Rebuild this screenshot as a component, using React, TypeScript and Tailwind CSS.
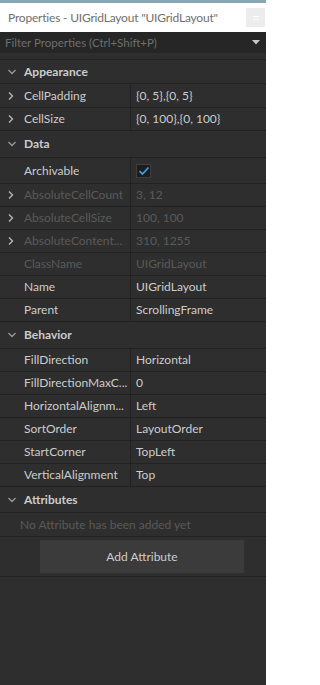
import { ReactNode } from "react";

const ChevronRight = () => (
  <svg width="8" height="10" viewBox="0 0 8 10" className="shrink-0">
    <path d="M2 1.5 L5.5 5 L2 8.5" fill="none" stroke="#b5b5b5" strokeWidth="1.4" />
  </svg>
);

const ChevronDown = () => (
  <svg width="10" height="8" viewBox="0 0 10 8" className="shrink-0">
    <path d="M1.5 2 L5 5.5 L8.5 2" fill="none" stroke="#9a9a9a" strokeWidth="1.3" />
  </svg>
);

type Prop = {
  name: string;
  value?: ReactNode;
  expand?: boolean;
  dim?: boolean;
  h?: string;
};

const Row = ({ name, value, expand, dim, h = "h-[23px]" }: Prop) => (
  <div className={`flex border-b border-[#222222] ${h}`}>
    <div className="w-[131px] flex items-center border-r border-[#222222] shrink-0">
      <div className="w-[22px] flex justify-center mr-[2px]">{expand && <ChevronRight />}</div>
      <span className={`whitespace-nowrap overflow-hidden ${dim ? "text-[#5a5a5a]" : "text-[#cccccc]"}`}>{name}</span>
    </div>
    <div className={`flex items-center pl-[5px] whitespace-nowrap ${dim ? "text-[#5a5a5a]" : "text-[#cccccc]"}`}>{value}</div>
  </div>
);

const Header = ({ title, h = "h-[26px]" }: { title: string; h?: string }) => (
  <div className={`flex items-center border-b border-[#222222] ${h}`}>
    <div className="w-[24px] flex justify-center">
      <ChevronDown />
    </div>
    <span className="font-bold text-[#cccccc]">{title}</span>
  </div>
);

const Check = () => (
  <div className="w-[15px] h-[14px] bg-[#1d1d1d] border border-[#3e3e3e] flex items-center justify-center">
    <svg width="12" height="10" viewBox="0 0 12 10">
      <path d="M1.5 5.2 L4.5 8 L10.5 1.5" fill="none" stroke="#3d9de3" strokeWidth="1.8" />
    </svg>
  </div>
);

export default function App() {
  return (
    <div
      className="w-[266px] h-[685px] bg-[#2e2e2e] flex flex-col text-[12px] overflow-hidden"
      style={{ fontFamily: "Lato, 'Noto Sans', sans-serif" }}
    >
      {/* Title bar */}
      <div className="h-[3px] bg-[#8aa7b5]" />
      <div className="h-[29px] bg-white flex items-center pl-[8px]">
        <span className="text-[#707070] text-[12px] tracking-[-0.2px] flex-1 whitespace-nowrap">
          Properties - UIGridLayout "UIGridLayout"
        </span>
        <div className="w-[19px] h-[19px] bg-[#ececec] flex flex-col items-center justify-center gap-[2px] mr-[1px]">
          <div className="w-[6px] h-px bg-white" />
          <div className="w-[6px] h-px bg-white" />
        </div>
      </div>

      {/* Filter */}
      <div className="h-[21px] bg-[#262626] flex items-center pl-[5px] pr-[6px]">
        <span className="flex-1 text-[#6e6e6e] text-[11.5px]">Filter Properties (Ctrl+Shift+P)</span>
        <svg width="8" height="5" viewBox="0 0 8 5">
          <path d="M0 0 H8 L4 4.5 Z" fill="#c8c8c8" />
        </svg>
      </div>
      <div className="h-[7px] border-b border-[#222222]" />

      <Header title="Appearance" h="h-[24px]" />
      <Row name="CellPadding" value="{0, 5},{0, 5}" expand h="h-[24px]" />
      <Row name="CellSize" value="{0, 100},{0, 100}" expand />

      <Header title="Data" h="h-[27px]" />
      <Row name="Archivable" value={<Check />} h="h-[26px]" />
      <Row name="AbsoluteCellCount" value="3, 12" expand dim />
      <Row name="AbsoluteCellSize" value="100, 100" expand dim />
      <Row name="AbsoluteContent..." value="310, 1255" expand dim />
      <Row name="ClassName" value="UIGridLayout" dim />
      <Row name="Name" value="UIGridLayout" />
      <Row name="Parent" value="ScrollingFrame" />

      <Header title="Behavior" h="h-[27px]" />
      <Row name="FillDirection" value="Horizontal" />
      <Row name="FillDirectionMaxC..." value="0" />
      <Row name="HorizontalAlignm..." value="Left" />
      <Row name="SortOrder" value="LayoutOrder" />
      <Row name="StartCorner" value="TopLeft" />
      <Row name="VerticalAlignment" value="Top" />

      <Header title="Attributes" h="h-[26px]" />
      <div className="h-[24px] flex items-center pl-[20px] text-[#5a5a5a] border-b border-[#222222]">
        No Attribute has been added yet
      </div>
      <div className="h-[40px] flex items-center pl-[40px] border-b border-[#222222]">
        <div className="w-[204px] h-[33px] bg-[#3b3b3b] flex items-center justify-center text-[#cccccc]">
          Add Attribute
        </div>
      </div>
    </div>
  );
}
